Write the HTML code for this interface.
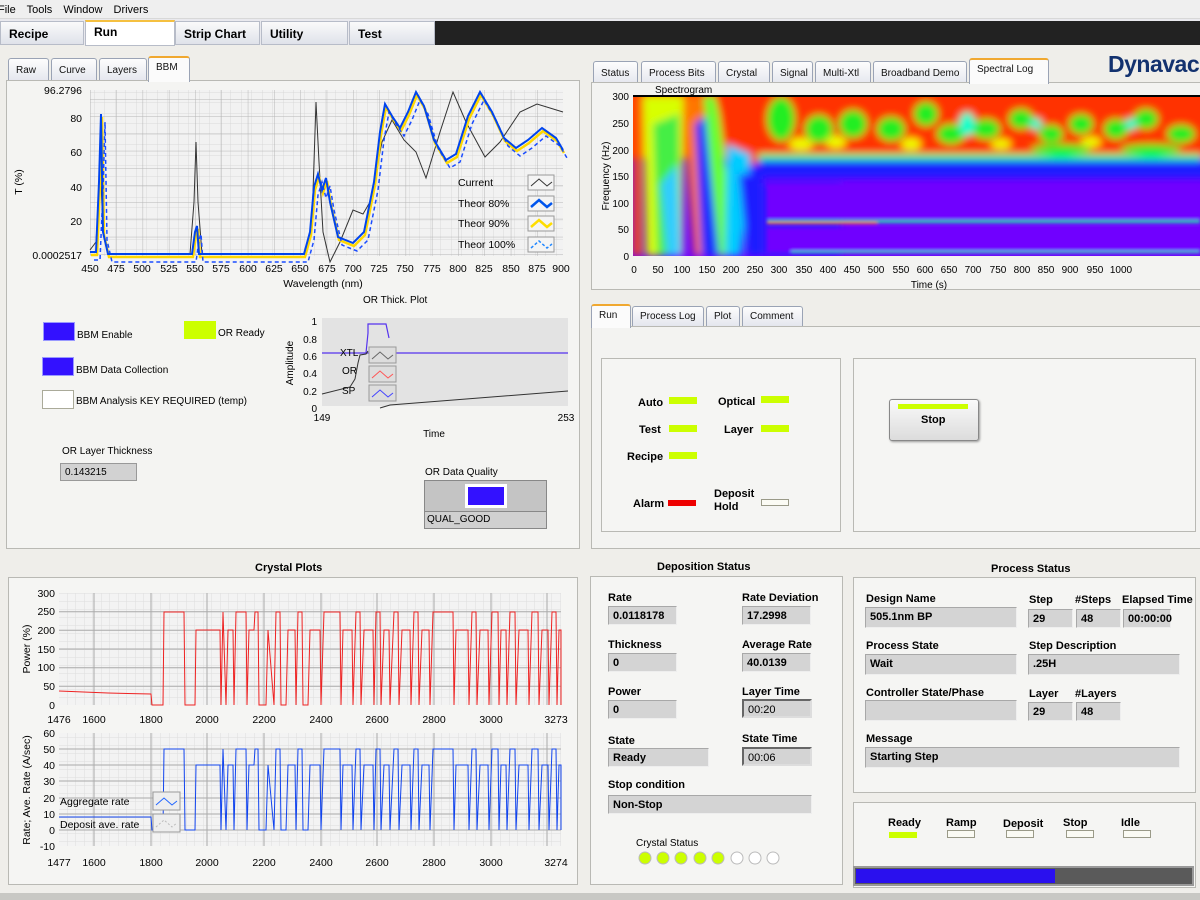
<!DOCTYPE html>
<html><head><meta charset="utf-8"><style>
*{box-sizing:border-box;margin:0;padding:0}
body{width:1200px;height:900px;overflow:hidden;background:#efeeea;font-family:"Liberation Sans",sans-serif;font-size:11px;color:#000;position:relative}
.a{position:absolute}
.tab{position:absolute;height:23px;border:1px solid #9aa3b5;border-bottom:none;border-radius:3px 3px 0 0;background:linear-gradient(#fdfdfd,#e4e6ee);padding:6px 0 0 7px;font-size:10px;color:#111;white-space:nowrap}
.tab.s{background:#fbfbfb;border-top:2px solid #f0a830;padding-top:4px;height:25px}
.bt{position:absolute;height:24px;background:linear-gradient(#fafafa,#dfe2ea);border:1px solid #b7bcc8;font-weight:bold;font-size:12px;padding:5px 0 0 8px}
.box{position:absolute;border:1px solid #b9b9b4;background:#f5f5f3}
.fld{position:absolute;height:19px;background:#d4d4d4;border:1px solid #a8a8a8;border-right-color:#eee;border-bottom-color:#eee;padding:3px 0 0 4px;font-size:11px;font-weight:bold}
.lb{position:absolute;font-weight:bold;font-size:11px}
.led{position:absolute;width:32px;height:7px;background:#ccff00}
.off{position:absolute;width:32px;height:8px;background:#fbfbf4;border:1px solid #9a9a88}
</style></head><body>
<div class="a" style="left:0;top:0;width:1200px;height:19px;background:#efefef;border-bottom:1px solid #d8d8d8"></div>
<div class="a" style="left:-2px;top:4px;font-size:11px;word-spacing:8px">File Tools Window Drivers</div>
<div class="a" style="left:0;top:19px;width:1200px;height:26px;background:#e9e9ee"></div>
<div class="bt" style="left:0;top:21px;width:84px">Recipe</div>
<div class="bt" style="left:85px;top:20px;width:90px;height:26px;background:#fff;border-top:2px solid #f5c040;padding-top:3px">Run</div>
<div class="bt" style="left:175px;top:21px;width:85px">Strip Chart</div>
<div class="bt" style="left:261px;top:21px;width:87px">Utility</div>
<div class="bt" style="left:349px;top:21px;width:86px">Test</div>
<div class="a" style="left:435px;top:21px;width:765px;height:24px;background:#222"></div>

<div class="tab" style="left:8px;top:58px;width:41px">Raw</div>
<div class="tab" style="left:51px;top:58px;width:46px">Curve</div>
<div class="tab" style="left:99px;top:58px;width:48px">Layers</div>
<div class="box" style="left:6px;top:80px;width:574px;height:469px;background:#f4f4f2"></div>
<div class="tab s" style="left:148px;top:56px;width:42px;border-bottom:none;height:26px">BBM</div>

<svg class="a" style="left:0;top:82px" width="580" height="215" font-family="Liberation Sans" font-size="10.5">
<defs><pattern id="g1" width="10.5" height="10.5" patternUnits="userSpaceOnUse"><path d="M10.5 0V10.5M0 10.5H10.5" stroke="#d9d9d9" stroke-width="1" fill="none"/></pattern>
<pattern id="g1b" width="26.3" height="17.2" patternUnits="userSpaceOnUse" x="90"><path d="M0 0V17.2M0 0H26.3" stroke="#b5b5b5" fill="none"/></pattern></defs>
<rect x="90" y="8" width="473" height="166" fill="#f2f2f2"/>
<rect x="90" y="8" width="473" height="166" fill="url(#g1)"/>
<rect x="90" y="8" width="473" height="166" fill="url(#g1b)"/>
<g text-anchor="end"><text x="82" y="12">96.2796</text><text x="82" y="40">80</text><text x="82" y="74">60</text><text x="82" y="109">40</text><text x="82" y="143">20</text><text x="82" y="177">0.0002517</text></g>
<text x="22" y="100" transform="rotate(-90 22 100)" text-anchor="middle">T (%)</text>
<g text-anchor="middle"><text x="90" y="190">450</text><text x="116" y="190">475</text><text x="142" y="190">500</text><text x="169" y="190">525</text><text x="195" y="190">550</text><text x="221" y="190">575</text><text x="248" y="190">600</text><text x="274" y="190">625</text><text x="300" y="190">650</text><text x="327" y="190">675</text><text x="353" y="190">700</text><text x="379" y="190">725</text><text x="405" y="190">750</text><text x="432" y="190">775</text><text x="458" y="190">800</text><text x="484" y="190">825</text><text x="511" y="190">850</text><text x="537" y="190">875</text><text x="561" y="190">900</text>
<text x="323" y="205">Wavelength (nm)</text></g>
<path d="M90 168 L96 160 L99 110 L101 100 L103 150 L108 172 L190 172 L194 120 L196 60 L198 120 L202 172 L306 172 L312 140 L316 20 L319 80 L323 150 L330 180 L340 160 L353 128 L363 132 L370 120 L382 60 L392 38 L404 58 L416 70 L426 96 L440 50 L453 10 L466 40 L485 75 L500 60 L520 30 L537 22 L563 30" stroke="#333" stroke-width="1" fill="none"/>
<path d="M90 170 L96 170 L99 100 L101 32 L103 150 L108 172 L192 172 L195 150 L197 144 L199 172 L304 172 L310 150 L314 105 L318 92 L322 108 L326 96 L330 120 L338 155 L353 161 L364 150 L374 100 L380 50 L385 22 L392 34 L400 46 L408 30 L416 10 L424 24 L434 58 L446 78 L456 72 L468 34 L480 10 L492 30 L504 56 L516 66 L528 58 L542 46 L556 56 L563 68" stroke="#ffd800" stroke-width="2.5" fill="none" transform="translate(1,3)"/>
<path d="M90 170 L96 170 L99 100 L101 32 L103 150 L108 172 L192 172 L195 150 L197 144 L199 172 L304 172 L310 150 L314 105 L318 92 L322 108 L326 96 L330 120 L338 155 L353 161 L364 150 L374 100 L380 50 L385 22 L392 34 L400 46 L408 30 L416 10 L424 24 L434 58 L446 78 L456 72 L468 34 L480 10 L492 30 L504 56 L516 66 L528 58 L542 46 L556 56 L563 68" stroke="#1a4cff" stroke-width="1.5" stroke-dasharray="4 3" fill="none" transform="translate(4,8)"/>
<path d="M90 170 L96 170 L99 100 L101 32 L103 150 L108 172 L192 172 L195 150 L197 144 L199 172 L304 172 L310 150 L314 105 L318 92 L322 108 L326 96 L330 120 L338 155 L353 161 L364 150 L374 100 L380 50 L385 22 L392 34 L400 46 L408 30 L416 10 L424 24 L434 58 L446 78 L456 72 L468 34 L480 10 L492 30 L504 56 L516 66 L528 58 L542 46 L556 56 L563 68" stroke="#0044ee" stroke-width="2" fill="none"/>
<g><text x="458" y="104">Current</text><text x="458" y="125">Theor 80%</text><text x="458" y="145">Theor 90%</text><text x="458" y="166">Theor 100%</text>
<rect x="528" y="93" width="26" height="15" fill="#f4f4f4" stroke="#999"/><path d="M531 104 l8-7 l8 7 l5-4" stroke="#333" fill="none"/>
<rect x="528" y="114" width="26" height="15" fill="#f4f4f4" stroke="#999"/><path d="M531 125 l8-7 l8 7 l5-4" stroke="#05e" stroke-width="2.5" fill="none"/>
<rect x="528" y="134" width="26" height="15" fill="#f4f4f4" stroke="#999"/><path d="M531 145 l8-7 l8 7 l5-4" stroke="#fd0" stroke-width="2.5" fill="none"/>
<rect x="528" y="155" width="26" height="15" fill="#f4f4f4" stroke="#999"/><path d="M531 166 l8-7 l8 7 l5-4" stroke="#28f" stroke-width="1.5" stroke-dasharray="3 2" fill="none"/></g>
</svg>

<div class="a" style="left:43px;top:322px;width:32px;height:19px;background:#3311ff;border:1px solid #99f"></div>
<div class="a" style="left:77px;top:330px;font-size:10px">BBM Enable</div>
<div class="a" style="left:184px;top:321px;width:32px;height:18px;background:#ccff00"></div>
<div class="a" style="left:218px;top:328px;font-size:10px">OR Ready</div>
<div class="a" style="left:42px;top:357px;width:32px;height:19px;background:#3311ff;border:1px solid #99f"></div>
<div class="a" style="left:76px;top:365px;font-size:10px">BBM Data Collection</div>
<div class="a" style="left:42px;top:390px;width:32px;height:19px;background:#fff;border:1px solid #aa9"></div>
<div class="a" style="left:76px;top:396px;font-size:10px">BBM Analysis KEY REQUIRED (temp)</div>
<div class="a" style="left:62px;top:446px;font-size:10px">OR Layer Thickness</div>
<div class="a" style="left:60px;top:463px;width:77px;height:18px;background:#d2d2d2;border:1px solid #999;padding:3px 4px;font-size:10px">0.143215</div>
<div class="a" style="left:425px;top:467px;font-size:10px">OR Data Quality</div>
<div class="a" style="left:424px;top:480px;width:123px;height:49px;background:#c4c4c4;border:1px solid #888"></div>
<div class="a" style="left:465px;top:484px;width:42px;height:24px;background:#fff"></div>
<div class="a" style="left:468px;top:487px;width:36px;height:18px;background:#3311ff"></div>
<div class="a" style="left:425px;top:511px;width:121px;height:17px;background:#d0d0d0;border-top:1px solid #888;padding:2px;font-size:10px">QUAL_GOOD</div>

<svg class="a" style="left:280px;top:293px" width="300" height="150" font-family="Liberation Sans" font-size="10">
<text x="83" y="10">OR Thick. Plot</text>
<rect x="42" y="25" width="246" height="88" fill="#e3e3e3"/>
<g text-anchor="end"><text x="37" y="32">1</text><text x="37" y="50">0.8</text><text x="37" y="67">0.6</text><text x="37" y="84">0.4</text><text x="37" y="102">0.2</text><text x="37" y="119">0</text></g>
<text x="13" y="70" transform="rotate(-90 13 70)" text-anchor="middle">Amplitude</text>
<text x="42" y="128" text-anchor="middle">149</text><text x="286" y="128" text-anchor="middle">253</text><text x="154" y="144" text-anchor="middle">Time</text>
<path d="M42 60 H288" stroke="#5533ee" stroke-width="1.2"/>
<path d="M86 60 L88 40 V31 H106 L109 45" stroke="#5533ee" stroke-width="1.2" fill="none"/>
<path d="M42 101 L70 94 L75 86 L78 70 L80 62 L86 61 L88 58 M100 115 L110 112 L288 98" stroke="#333" fill="none"/>
<text x="60" y="63">XTL</text><text x="62" y="81">OR</text><text x="62" y="101">SP</text>
<rect x="89" y="54" width="27" height="16" fill="#ddd" stroke="#999"/><path d="M92 66 l8-7 l8 7 l5-4" stroke="#666" fill="none"/>
<rect x="89" y="73" width="27" height="16" fill="#ddd" stroke="#999"/><path d="M92 85 l8-7 l8 7 l5-4" stroke="#f55" fill="none"/>
<rect x="89" y="92" width="27" height="16" fill="#ddd" stroke="#999"/><path d="M92 104 l8-7 l8 7 l5-4" stroke="#44f" fill="none"/>
</svg>

<div class="tab" style="left:593px;top:61px;width:45px">Status</div>
<div class="tab" style="left:641px;top:61px;width:75px">Process Bits</div>
<div class="tab" style="left:718px;top:61px;width:52px">Crystal</div>
<div class="tab" style="left:772px;top:61px;width:41px">Signal</div>
<div class="tab" style="left:815px;top:61px;width:56px">Multi-Xtl</div>
<div class="tab" style="left:873px;top:61px;width:94px">Broadband Demo</div>
<div class="box" style="left:591px;top:82px;width:615px;height:208px;background:#f3f3f1"></div>
<div class="tab s" style="left:969px;top:58px;width:80px;height:26px;border-bottom:none">Spectral Log</div>
<div class="a" style="left:1108px;top:51px;font-size:23px;font-weight:bold;color:#13326f;letter-spacing:-0.5px">Dynavac</div>

<svg class="a" style="left:591px;top:84px" width="609" height="206" font-family="Liberation Sans" font-size="10">
<defs><filter id="bl" x="-10%" y="-10%" width="120%" height="120%"><feGaussianBlur stdDeviation="4"/></filter>
<filter id="bl2"><feGaussianBlur stdDeviation="1.5"/></filter>
<clipPath id="cp"><rect x="42" y="12" width="567" height="160"/></clipPath></defs>
<text x="64" y="9">Spectrogram</text>
<g clip-path="url(#cp)">
<rect x="42" y="12" width="567" height="160" fill="#7000ff"/>
<g filter="url(#bl)">
<rect x="30" y="0" width="600" height="74" fill="#ff3300"/>
<rect x="160" y="74" width="460" height="20" fill="#1a1aff"/>
<rect x="150" y="70" width="460" height="6" fill="#00ff80"/>
<g fill="#22ee22"><ellipse cx="190" cy="35" rx="14" ry="22"/><ellipse cx="228" cy="45" rx="14" ry="14"/><ellipse cx="262" cy="40" rx="14" ry="14"/><ellipse cx="300" cy="45" rx="14" ry="12"/><ellipse cx="335" cy="30" rx="12" ry="12"/><ellipse cx="360" cy="50" rx="14" ry="10"/><ellipse cx="395" cy="45" rx="14" ry="10"/><ellipse cx="430" cy="35" rx="12" ry="10"/><ellipse cx="460" cy="50" rx="12" ry="9"/><ellipse cx="490" cy="40" rx="12" ry="10"/><ellipse cx="525" cy="45" rx="12" ry="10"/><ellipse cx="555" cy="35" rx="12" ry="10"/><ellipse cx="590" cy="50" rx="14" ry="9"/><ellipse cx="470" cy="65" rx="30" ry="5"/><ellipse cx="560" cy="65" rx="30" ry="5"/></g>
<g fill="#eeff00"><ellipse cx="210" cy="60" rx="12" ry="6"/><ellipse cx="245" cy="58" rx="10" ry="6"/><ellipse cx="320" cy="60" rx="10" ry="6"/><ellipse cx="410" cy="60" rx="10" ry="5"/><ellipse cx="500" cy="58" rx="10" ry="5"/></g>
<ellipse cx="376" cy="40" rx="8" ry="12" fill="#00ffcc"/>
<ellipse cx="445" cy="40" rx="6" ry="6" fill="#00ffcc"/>
<ellipse cx="540" cy="40" rx="6" ry="6" fill="#00ffcc"/>
<rect x="42" y="12" width="8" height="160" fill="#ff5500"/>
<polygon points="52,12 92,12 92,172 55,172" fill="#d8ff00"/>
<polygon points="62,40 88,30 90,172 66,172" fill="#44ee44"/>
<polygon points="70,100 86,80 90,172 76,172" fill="#33ccff"/>
<polygon points="92,12 110,12 118,172 104,172" fill="#ff7700"/>
<polygon points="104,40 116,30 136,172 110,172" fill="#1a2aff"/>
<polygon points="112,12 126,12 146,172 128,172" fill="#66ff33"/>
<polygon points="124,12 160,12 168,80 140,80" fill="#ff3300"/>
<polygon points="136,60 160,70 150,172 134,172" fill="#00ccff"/>
<polygon points="148,90 172,90 172,172 156,172" fill="#1a1aff"/>
<polygon points="172,100 250,100 250,172 172,172" fill="#3a12ff"/>
</g>
<g filter="url(#bl2)">
<rect x="176" y="100" width="433" height="35" fill="#7000ff"/>
<rect x="176" y="144" width="433" height="24" fill="#7000ff"/>
<rect x="176" y="136" width="433" height="3" fill="#22ddaa"/>
<rect x="176" y="138" width="110" height="2" fill="#ff4400"/>
<rect x="200" y="167" width="409" height="2" fill="#22ddaa"/>
</g>
</g>
<path d="M42 12 H609" stroke="#000" stroke-width="2"/>
<g text-anchor="end"><text x="38" y="16">300</text><text x="38" y="43">250</text><text x="38" y="70">200</text><text x="38" y="96">150</text><text x="38" y="123">100</text><text x="38" y="149">50</text><text x="38" y="176">0</text></g>
<text x="18" y="92" transform="rotate(-90 18 92)" text-anchor="middle">Frequency (Hz)</text>
<g text-anchor="middle"><text x="43" y="189">0</text><text x="67" y="189">50</text><text x="91" y="189">100</text><text x="116" y="189">150</text><text x="140" y="189">200</text><text x="164" y="189">250</text><text x="188" y="189">300</text><text x="213" y="189">350</text><text x="237" y="189">400</text><text x="261" y="189">450</text><text x="285" y="189">500</text><text x="310" y="189">550</text><text x="334" y="189">600</text><text x="358" y="189">650</text><text x="382" y="189">700</text><text x="407" y="189">750</text><text x="431" y="189">800</text><text x="455" y="189">850</text><text x="479" y="189">900</text><text x="504" y="189">950</text><text x="530" y="189">1000</text>
<text x="338" y="204">Time (s)</text></g>
</svg>

<div class="box" style="left:591px;top:326px;width:615px;height:223px;background:#f3f3f1"></div>
<div class="tab s" style="left:591px;top:304px;width:40px;height:24px;border-bottom:none">Run</div>
<div class="tab" style="left:632px;top:306px;width:72px;height:20px;padding-top:4px">Process Log</div>
<div class="tab" style="left:706px;top:306px;width:34px;height:20px;padding-top:4px">Plot</div>
<div class="tab" style="left:742px;top:306px;width:61px;height:20px;padding-top:4px">Comment</div>
<div class="box" style="left:601px;top:358px;width:240px;height:174px"></div>
<div class="box" style="left:853px;top:358px;width:343px;height:174px"></div>
<div class="lb" style="left:638px;top:397px">Auto</div><div class="led" style="left:669px;top:397px;width:28px"></div>
<div class="lb" style="left:718px;top:396px">Optical</div><div class="led" style="left:761px;top:396px;width:28px"></div>
<div class="lb" style="left:639px;top:424px">Test</div><div class="led" style="left:669px;top:425px;width:28px"></div>
<div class="lb" style="left:724px;top:424px">Layer</div><div class="led" style="left:761px;top:425px;width:28px"></div>
<div class="lb" style="left:627px;top:451px">Recipe</div><div class="led" style="left:669px;top:452px;width:28px"></div>
<div class="lb" style="left:633px;top:498px">Alarm</div><div class="a" style="left:668px;top:500px;width:28px;height:6px;background:#ee0000"></div>
<div class="lb" style="left:714px;top:488px;line-height:13px">Deposit<br>Hold</div><div class="off" style="left:761px;top:499px;width:28px;height:7px"></div>
<div class="a" style="left:889px;top:399px;width:90px;height:42px;border:1px solid #888;border-radius:3px;background:linear-gradient(#fafafa,#dcdcdc);box-shadow:1px 1px 2px #999"></div>
<div class="a" style="left:898px;top:404px;width:70px;height:5px;background:#ccff00"></div>
<div class="lb" style="left:921px;top:414px">Stop</div>

<div class="lb" style="left:255px;top:562px">Crystal Plots</div>
<div class="box" style="left:8px;top:577px;width:570px;height:308px"></div>
<svg class="a" style="left:8px;top:578px" width="570" height="306" font-family="Liberation Sans" font-size="10.5">
<defs><pattern id="g2" width="8.5" height="8" patternUnits="userSpaceOnUse"><path d="M8.5 0V8M0 8H8.5" stroke="#dedede" fill="none"/></pattern></defs>
<rect x="51" y="15" width="502" height="112" fill="#f3f3f3"/><rect x="51" y="15" width="502" height="112" fill="url(#g2)"/>
<rect x="51" y="155" width="502" height="113" fill="#f3f3f3"/><rect x="51" y="155" width="502" height="113" fill="url(#g2)"/>
<g stroke="#aaa"><path d="M86 15V127M143 15V127M199 15V127M256 15V127M313 15V127M369 15V127M426 15V127M483 15V127M539 15V127M51 33.7H553M51 52.3H553M51 71H553M51 89.7H553M51 108.3H553"/>
<path d="M86 155V268M143 155V268M199 155V268M256 155V268M313 155V268M369 155V268M426 155V268M483 155V268M539 155V268M51 171H553M51 187H553M51 203H553M51 220H553M51 236H553M51 252H553"/></g>
<g text-anchor="end"><text x="47" y="19">300</text><text x="47" y="37">250</text><text x="47" y="56">200</text><text x="47" y="75">150</text><text x="47" y="93">100</text><text x="47" y="112">50</text><text x="47" y="131">0</text>
<text x="47" y="159">60</text><text x="47" y="175">50</text><text x="47" y="191">40</text><text x="47" y="207">30</text><text x="47" y="224">20</text><text x="47" y="240">10</text><text x="47" y="256">0</text><text x="47" y="272">-10</text></g>
<g text-anchor="middle"><text x="51" y="145">1476</text><text x="86" y="145">1600</text><text x="143" y="145">1800</text><text x="199" y="145">2000</text><text x="256" y="145">2200</text><text x="313" y="145">2400</text><text x="369" y="145">2600</text><text x="426" y="145">2800</text><text x="483" y="145">3000</text><text x="548" y="145">3273</text>
<text x="51" y="288">1477</text><text x="86" y="288">1600</text><text x="143" y="288">1800</text><text x="199" y="288">2000</text><text x="256" y="288">2200</text><text x="313" y="288">2400</text><text x="369" y="288">2600</text><text x="426" y="288">2800</text><text x="483" y="288">3000</text><text x="548" y="288">3274</text></g>
<text x="22" y="71" transform="rotate(-90 22 71)" text-anchor="middle">Power (%)</text>
<text x="22" y="212" transform="rotate(-90 22 212)" text-anchor="middle">Rate; Ave. Rate (A/sec)</text>
<path d="M51 113 L100 115 L143 116 L144 127 L155 127 L156 34 L176 34 L177 127 L187 127 L188 52 L212 52 L213 127 L215 34 L218 127 L220 52 L225 52 L226 127 L228 34 L238 34 L239 127 L241 52 L246 52 L247 34 L250 34 L251 127 L258 127 L260 52 L266 127 L268 34 L272 34 L273 127 L278 127 L280 52 L287 52 L288 127 L290 34 L294 34 L295 127 L300 127 L302 52 L312 52 L313 127 L316 34 L332 34 L333 127 L335 52 L344 52 L345 127 L348 34 L352 34 L353 127 L356 52 L365 52 L366 127 L368 34 L372 34 L373 127 L376 52 L381 52 L382 127 L386 34 L390 34 L391 127 L394 52 L402 52 L403 127 L406 34 L410 34 L411 127 L414 52 L421 52 L422 127 L425 34 L445 34 L446 127 L448 52 L460 52 L461 127 L464 34 L468 34 L469 127 L472 52 L480 52 L481 127 L484 34 L490 34 L491 127 L493 52 L498 52 L499 127 L502 34 L507 34 L508 127 L511 52 L520 52 L521 127 L524 34 L530 34 L531 127 L534 52 L540 52 L541 127 L544 34 L548 34 L549 127 L551 52 L553 52 L553 127" stroke="#ee2222" fill="none"/>
<path d="M51 239 L143 239 L144 252 L155 252 L156 171 L176 171 L177 252 L187 252 L188 187 L212 187 L213 252 L215 171 L218 252 L220 187 L225 187 L226 252 L228 171 L238 171 L239 252 L241 187 L246 187 L247 171 L250 171 L251 252 L258 252 L260 187 L266 252 L268 171 L272 171 L273 252 L278 252 L280 187 L287 187 L288 252 L290 171 L294 171 L295 252 L300 252 L302 187 L312 187 L313 252 L316 171 L332 171 L333 252 L335 187 L344 187 L345 252 L348 171 L352 171 L353 252 L356 187 L365 187 L366 252 L368 171 L372 171 L373 252 L376 187 L381 187 L382 252 L386 171 L390 171 L391 252 L394 187 L402 187 L403 252 L406 171 L410 171 L411 252 L414 187 L421 187 L422 252 L425 171 L445 171 L446 252 L448 187 L460 187 L461 252 L464 171 L468 171 L469 252 L472 187 L480 187 L481 252 L484 171 L490 171 L491 252 L493 187 L498 187 L499 252 L502 171 L507 171 L508 252 L511 187 L520 187 L521 252 L524 171 L530 171 L531 252 L534 187 L540 187 L541 252 L544 171 L548 171 L549 252 L551 187 L553 187 L553 252" stroke="#1144ee" fill="none"/>
<text x="52" y="227">Aggregate rate</text><text x="52" y="250">Deposit ave. rate</text>
<rect x="145" y="214" width="27" height="18" fill="#eee" stroke="#999"/><path d="M148 227 l8-7 l8 7 l5-4" stroke="#26f" fill="none"/>
<rect x="145" y="236" width="27" height="18" fill="#eee" stroke="#999"/><path d="M148 249 l8-7 l8 7 l5-4" stroke="#bbb" stroke-dasharray="2 2" fill="none"/>
</svg>

<div class="lb" style="left:657px;top:561px">Deposition Status</div>
<div class="box" style="left:590px;top:576px;width:253px;height:309px"></div>
<div class="lb" style="left:608px;top:592px">Rate</div><div class="fld" style="left:608px;top:606px;width:69px">0.0118178</div>
<div class="lb" style="left:742px;top:592px">Rate Deviation</div><div class="fld" style="left:742px;top:606px;width:69px">17.2998</div>
<div class="lb" style="left:608px;top:639px">Thickness</div><div class="fld" style="left:608px;top:653px;width:69px">0</div>
<div class="lb" style="left:742px;top:639px">Average Rate</div><div class="fld" style="left:742px;top:653px;width:69px">40.0139</div>
<div class="lb" style="left:608px;top:686px">Power</div><div class="fld" style="left:608px;top:700px;width:69px">0</div>
<div class="lb" style="left:742px;top:686px">Layer Time</div><div class="fld" style="left:742px;top:699px;width:70px;font-weight:normal;border:2px solid #666;border-right-color:#ddd;border-bottom-color:#ddd">00:20</div>
<div class="lb" style="left:608px;top:735px">State</div><div class="fld" style="left:608px;top:748px;width:101px">Ready</div>
<div class="lb" style="left:742px;top:733px">State Time</div><div class="fld" style="left:742px;top:747px;width:70px;font-weight:normal;border:2px solid #666;border-right-color:#ddd;border-bottom-color:#ddd">00:06</div>
<div class="lb" style="left:608px;top:779px">Stop condition</div><div class="fld" style="left:608px;top:795px;width:204px">Non-Stop</div>
<div class="a" style="left:636px;top:838px;font-size:10px">Crystal Status</div>
<svg class="a" style="left:636px;top:849px" width="150" height="18"><g stroke="#bbb"><circle cx="9" cy="9" r="6" fill="#ccff00"/><circle cx="27" cy="9" r="6" fill="#ccff00"/><circle cx="45" cy="9" r="6" fill="#ccff00"/><circle cx="64" cy="9" r="6" fill="#ccff00"/><circle cx="82" cy="9" r="6" fill="#ccff00"/><circle cx="101" cy="9" r="6" fill="#fff"/><circle cx="119" cy="9" r="6" fill="#fff"/><circle cx="137" cy="9" r="6" fill="#fff"/></g></svg>

<div class="lb" style="left:991px;top:563px">Process Status</div>
<div class="box" style="left:853px;top:577px;width:343px;height:216px"></div>
<div class="lb" style="left:866px;top:593px">Design Name</div><div class="fld" style="left:865px;top:607px;width:152px;height:21px">505.1nm BP</div>
<div class="lb" style="left:1029px;top:594px">Step</div><div class="fld" style="left:1028px;top:609px;width:45px">29</div>
<div class="lb" style="left:1075px;top:594px">#Steps</div><div class="fld" style="left:1076px;top:609px;width:45px">48</div>
<div class="lb" style="left:1122px;top:594px">Elapsed Time</div><div class="fld" style="left:1123px;top:609px;width:48px">00:00:00</div>
<div class="lb" style="left:866px;top:640px">Process State</div><div class="fld" style="left:865px;top:654px;width:152px;height:21px">Wait</div>
<div class="lb" style="left:1029px;top:640px">Step Description</div><div class="fld" style="left:1028px;top:654px;width:152px;height:21px">.25H</div>
<div class="lb" style="left:866px;top:687px">Controller State/Phase</div><div class="fld" style="left:865px;top:700px;width:152px;height:21px"></div>
<div class="lb" style="left:1029px;top:688px">Layer</div><div class="fld" style="left:1028px;top:702px;width:45px">29</div>
<div class="lb" style="left:1075px;top:688px">#Layers</div><div class="fld" style="left:1076px;top:702px;width:45px">48</div>
<div class="lb" style="left:866px;top:733px">Message</div><div class="fld" style="left:865px;top:747px;width:315px;height:21px">Starting Step</div>
<div class="box" style="left:853px;top:802px;width:343px;height:86px"></div>
<div class="lb" style="left:888px;top:817px">Ready</div><div class="led" style="left:889px;top:832px;width:28px;height:6px"></div>
<div class="lb" style="left:946px;top:817px">Ramp</div><div class="off" style="left:947px;top:830px;width:28px"></div>
<div class="lb" style="left:1003px;top:818px">Deposit</div><div class="off" style="left:1006px;top:830px;width:28px"></div>
<div class="lb" style="left:1063px;top:817px">Stop</div><div class="off" style="left:1066px;top:830px;width:28px"></div>
<div class="lb" style="left:1121px;top:817px">Idle</div><div class="off" style="left:1123px;top:830px;width:28px"></div>
<div class="a" style="left:853px;top:866px;width:341px;height:20px;background:#5a5a5a;border:2px solid #999"></div>
<div class="a" style="left:856px;top:869px;width:199px;height:14px;background:#2a10ee"></div>
<div class="a" style="left:0;top:893px;width:1200px;height:7px;background:#c8c8c4"></div>
</body></html>
